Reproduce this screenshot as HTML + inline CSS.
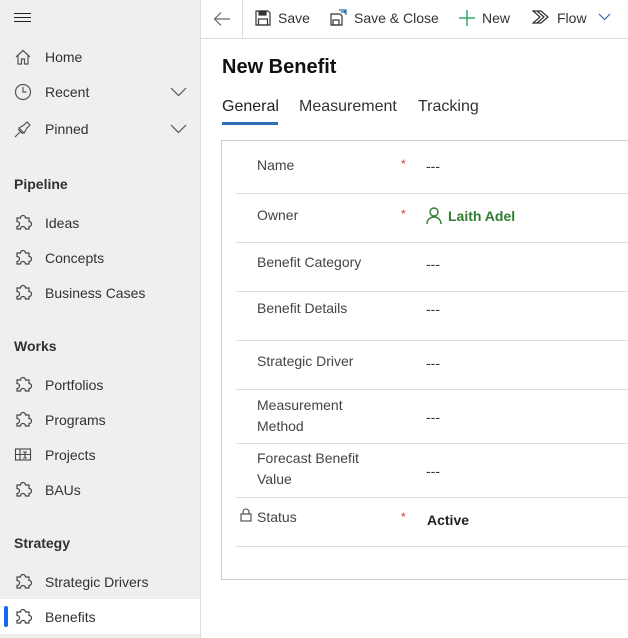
<!DOCTYPE html>
<html><head><meta charset="utf-8"><style>
*{margin:0;padding:0;box-sizing:border-box}
body{width:628px;height:638px;overflow:hidden;font-family:"Segoe UI","Liberation Sans",sans-serif;font-size:14px;color:#323130;background:#fff;position:relative}
.side{position:absolute;left:0;top:0;width:201px;height:638px;background:#efefef;border-right:1px solid #ddd}
.a{position:absolute;white-space:nowrap}
.ni{position:absolute;left:14px;width:18px;height:18px}
.nt{position:absolute;left:45px;font-size:14px;color:#323130}
.hd{position:absolute;left:14px;font-weight:bold;font-size:14px;color:#323130}
.lbl{position:absolute;left:257px;color:#444;font-size:14px;line-height:21px}
.val{position:absolute;left:426px;color:#333;font-size:14px}
.star{position:absolute;left:401px;color:#d13438;font-size:12px}
.sep{position:absolute;left:236px;right:0;height:1px;background:#ddd}
</style></head><body>
<div class="side">
  <div class="a" style="left:14px;top:13px;width:17px"><div style="height:1px;background:#222;margin-bottom:3px"></div><div style="height:1px;background:#222;margin-bottom:3px"></div><div style="height:1px;background:#222"></div></div>
  <svg class="ni" style="top:48px" viewBox="0 0 18 18" fill="none" stroke="#555" stroke-width="1.2"><path d="M2 9L9 2.5 16 9M4 7.5V16h3.5v-5h3v5H14V7.5"/></svg>
  <div class="nt" style="top:49px">Home</div>
  <svg class="ni" style="top:83px" viewBox="0 0 18 18" fill="none" stroke="#555" stroke-width="1.2"><circle cx="9" cy="9" r="7.5"/><path d="M9 4v5h3.5"/></svg>
  <div class="nt" style="top:84px">Recent</div>
  <svg class="a" style="left:170px;top:87px" width="17" height="10" viewBox="0 0 17 10" fill="none" stroke="#555" stroke-width="1.2"><path d="M1 1l7.5 7.5L16 1"/></svg>
  <svg class="ni" style="top:120px" viewBox="0 0 18 18" fill="none" stroke="#555" stroke-width="1.2"><path d="M1 17l5.5-5.5M4 9l5 5M5 8l5-3 3-3 3 3-3 3-3 5z"/></svg>
  <div class="nt" style="top:121px">Pinned</div>
  <svg class="a" style="left:170px;top:124px" width="17" height="10" viewBox="0 0 17 10" fill="none" stroke="#555" stroke-width="1.2"><path d="M1 1l7.5 7.5L16 1"/></svg>
  <div class="hd" style="top:176px">Pipeline</div>
  <svg class="ni" style="top:214px" viewBox="0 0 18 18"><use href="#pz"/></svg><div class="nt" style="top:215px">Ideas</div>
  <svg class="ni" style="top:249px" viewBox="0 0 18 18"><use href="#pz"/></svg><div class="nt" style="top:250px">Concepts</div>
  <svg class="ni" style="top:284px" viewBox="0 0 18 18"><use href="#pz"/></svg><div class="nt" style="top:285px">Business Cases</div>
  <div class="hd" style="top:338px">Works</div>
  <svg class="ni" style="top:376px" viewBox="0 0 18 18"><use href="#pz"/></svg><div class="nt" style="top:377px">Portfolios</div>
  <svg class="ni" style="top:411px" viewBox="0 0 18 18"><use href="#pz"/></svg><div class="nt" style="top:412px">Programs</div>
  <svg class="ni" style="top:446px" viewBox="0 0 18 18" fill="none" stroke="#444" stroke-width="1.1"><rect x="1.5" y="3" width="15" height="11"/><path d="M1.5 8.5h15M6 3v11M11 6v6M9 6h4M9 12h4"/></svg><div class="nt" style="top:447px">Projects</div>
  <svg class="ni" style="top:481px" viewBox="0 0 18 18"><use href="#pz"/></svg><div class="nt" style="top:482px">BAUs</div>
  <div class="hd" style="top:535px">Strategy</div>
  <svg class="ni" style="top:573px" viewBox="0 0 18 18"><use href="#pz"/></svg><div class="nt" style="top:574px">Strategic Drivers</div>
  <div class="a" style="left:0;top:599px;width:200px;height:35px;background:#fff"></div>
  <div class="a" style="left:4px;top:606px;width:4px;height:21px;background:#0f6cf0;border-radius:2px"></div>
  <svg class="ni" style="top:608px" viewBox="0 0 18 18"><use href="#pz"/></svg><div class="nt" style="top:609px">Benefits</div>
</div>
<svg width="0" height="0" style="position:absolute"><defs><g id="pz" fill="none" stroke="#444" stroke-width="1.2"><path d="M3 4h3.5a2.5 2.5 0 0 1 5 0H15v3.5a2.5 2.5 0 0 1 0 5V15h-3.5a2.5 2.5 0 0 0-5 0H3v-2.5a2.5 2.5 0 0 0 0-5z"/></g></defs></svg>

<div class="a" style="left:201px;top:38px;width:427px;height:1px;background:#ddd"></div>
<div class="a" style="left:242px;top:0;width:1px;height:38px;background:#ddd"></div>
<svg class="a" style="left:213px;top:11px" width="18" height="16" viewBox="0 0 18 16" fill="none" stroke="#666" stroke-width="1.2"><path d="M17 8H2M8 1.5L1.5 8 8 14.5"/></svg>
<svg class="a" style="left:255px;top:10px" width="16" height="16" viewBox="0 0 16 16" fill="none" stroke="#333" stroke-width="1.2"><path d="M1 1h12l2 2v12H1z"/><rect x="4" y="1" width="7" height="4" fill="#333"/><rect x="3.5" y="9" width="9" height="6"/></svg>
<div class="a" style="left:278px;top:10px;color:#333">Save</div>
<svg class="a" style="left:330px;top:9px" width="17" height="17" viewBox="0 0 17 17" fill="none" stroke="#333" stroke-width="1.2"><path d="M1 5h9l2 2v9H1z"/><rect x="3" y="11" width="6" height="5"/><path d="M9 1h7v5M11 3h4M14 2l1.5 1L14 4" stroke="#2b6cb0"/></svg>
<div class="a" style="left:354px;top:10px;color:#333">Save &amp; Close</div>
<svg class="a" style="left:459px;top:10px" width="16" height="16" viewBox="0 0 16 16" stroke="#3aa56b" stroke-width="1.5"><path d="M8 0v16M0 8h16"/></svg>
<div class="a" style="left:482px;top:10px;color:#333">New</div>
<svg class="a" style="left:532px;top:10px" width="17" height="14" viewBox="0 0 17 14" fill="none" stroke="#333" stroke-width="1.2"><path d="M1 1h8l7 6-7 6H1l7-6z M5 1l7 6-7 6"/></svg>
<div class="a" style="left:557px;top:10px;color:#333">Flow</div>
<svg class="a" style="left:598px;top:13px" width="13" height="8" viewBox="0 0 13 8" fill="none" stroke="#2b6cb0" stroke-width="1.2"><path d="M1 1l5.5 5.5L12 1"/></svg>

<div class="a" style="left:222px;top:56px;font-size:20px;font-weight:600;color:#111">New Benefit</div>
<div class="a" style="left:222px;top:98px;font-size:16px;color:#222">General</div>
<div class="a" style="left:222px;top:122px;width:56px;height:3px;background:#2f6fb5"></div>
<div class="a" style="left:299px;top:98px;font-size:16px;color:#333">Measurement</div>
<div class="a" style="left:418px;top:98px;font-size:16px;color:#333">Tracking</div>

<div class="a" style="left:221px;top:140px;width:420px;height:440px;border:1px solid #ccc"></div>
<div class="lbl" style="top:155px">Name</div><div class="star" style="top:157px">*</div><div class="val" style="top:158px">---</div>
<div class="sep" style="top:193px"></div>
<div class="lbl" style="top:205px">Owner</div><div class="star" style="top:207px">*</div>
<svg class="a" style="left:426px;top:207px" width="16" height="17" viewBox="0 0 16 17" fill="none" stroke="#2f7d32" stroke-width="1.4"><circle cx="8" cy="5" r="4"/><path d="M1 17c0-4 3-7 7-7s7 3 7 7"/></svg>
<div class="a" style="left:448px;top:208px;color:#2e7d32;font-weight:bold">Laith Adel</div>
<div class="sep" style="top:242px"></div>
<div class="lbl" style="top:252px">Benefit Category</div><div class="val" style="top:256px">---</div>
<div class="sep" style="top:291px"></div>
<div class="lbl" style="top:298px">Benefit Details</div><div class="val" style="top:301px">---</div>
<div class="sep" style="top:340px"></div>
<div class="lbl" style="top:351px">Strategic Driver</div><div class="val" style="top:355px">---</div>
<div class="sep" style="top:389px"></div>
<div class="lbl" style="top:395px">Measurement<br>Method</div><div class="val" style="top:409px">---</div>
<div class="sep" style="top:443px"></div>
<div class="lbl" style="top:448px">Forecast Benefit<br>Value</div><div class="val" style="top:463px">---</div>
<div class="sep" style="top:497px"></div>
<svg class="a" style="left:240px;top:508px" width="12" height="14" viewBox="0 0 12 14" fill="none" stroke="#444" stroke-width="1.1"><rect x="1" y="6" width="10" height="7"/><path d="M3 6V4a3 3 0 0 1 6 0v2"/></svg>
<div class="lbl" style="top:507px">Status</div><div class="star" style="top:510px">*</div>
<div class="a" style="left:427px;top:512px;font-weight:600;color:#222">Active</div>
<div class="sep" style="top:546px"></div>
</body></html>
